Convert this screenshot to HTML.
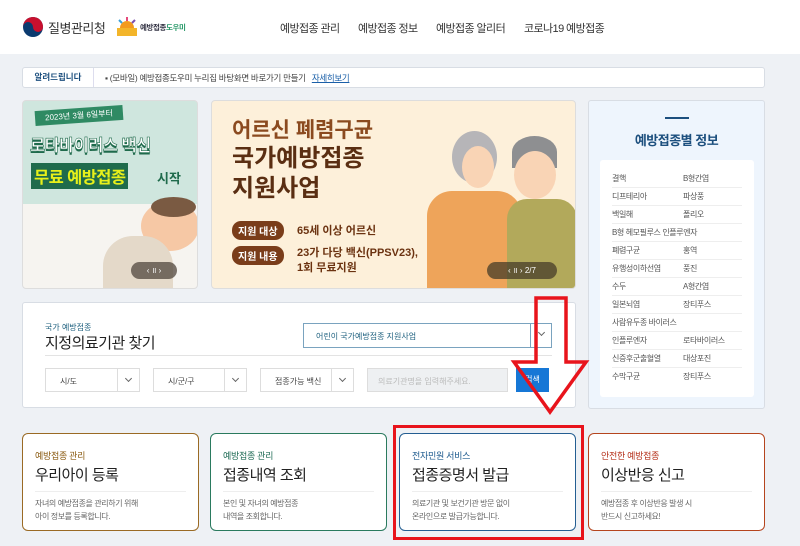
<!DOCTYPE html>
<html><head><meta charset="utf-8"><style>
*{margin:0;padding:0;box-sizing:border-box}
body{width:800px;height:546px;overflow:hidden;background:#eef1f5;font-family:"Liberation Sans","Noto Sans CJK KR",sans-serif;position:relative;color:#333}
.a{position:absolute}
.hdr{left:0;top:0;width:800px;height:54px;background:#fff}
.nav{top:20px;font-size:11px;color:#333;letter-spacing:-0.6px;white-space:nowrap}
.box{background:#fff;border:1px solid #d8dde4;border-radius:3px}
.card{top:433px;height:98px;width:177px;background:#fff;border-radius:6px;border:1.5px solid}
.card .k{position:absolute;left:12px;top:15px;font-size:9px;letter-spacing:-0.3px}
.card .t{position:absolute;left:12px;top:30px;font-size:15px;color:#222;letter-spacing:-0.5px}
.card .l{position:absolute;left:12px;right:12px;top:57px;border-top:1px solid #eee}
.card .d{position:absolute;left:12px;top:63px;font-size:8px;line-height:13px;color:#666;letter-spacing:-0.4px}
.sel{height:24px;border:1px solid #ddd;background:#fff;font-size:8px;color:#444;padding:7px 0 0 14px}
.sel i{position:absolute;right:0;top:0;width:22px;height:22px;border-left:1px solid #ddd}
.sel i:after,.dd:after{content:"";position:absolute;left:8px;top:7px;width:4px;height:4px;border-right:1px solid #666;border-bottom:1px solid #666;transform:rotate(45deg)}
.vl{font-size:8px;color:#555;line-height:18px;letter-spacing:-0.4px}
.vl div{border-bottom:1px solid #eee;height:18px;position:relative;white-space:nowrap}
.vl span{position:absolute;left:71px}
</style></head><body>
<div class="a hdr"></div>
<svg class="a" style="left:22px;top:16px" width="22" height="22" viewBox="0 0 22 22"><circle cx="11" cy="11" r="10" fill="#0b3a6f"/><path d="M1 11a10 10 0 0 1 20 0a5 5 0 0 1-10 0a5 5 0 0 0-10 0z" fill="#c8102e"/></svg>
<div class="a" style="left:48px;top:18px;font-size:13px;color:#333;letter-spacing:-0.5px">질병관리청</div>
<svg class="a" style="left:115px;top:15px" width="24" height="22"><rect x="2" y="13" width="20" height="8" fill="#f3b52a"/><path d="M5 13a7 7 0 0 1 14 0" fill="#f39a1e"/><line x1="12" y1="2" x2="12" y2="6" stroke="#e5497b" stroke-width="2"/><line x1="4" y1="5" x2="7" y2="8" stroke="#3aa0d8" stroke-width="2"/><line x1="20" y1="5" x2="17" y2="8" stroke="#7c4fb0" stroke-width="2"/></svg>
<div class="a" style="left:140px;top:22px;font-size:7.5px;font-weight:bold;color:#334;letter-spacing:-0.4px">예방접종<span style="color:#2a9a6a">도우미</span></div>
<div class="a nav" style="left:280px">예방접종 관리</div>
<div class="a nav" style="left:358px">예방접종 정보</div>
<div class="a nav" style="left:436px">예방접종 알리터</div>
<div class="a nav" style="left:524px">코로나19 예방접종</div>

<div class="a box" style="left:22px;top:67px;width:743px;height:21px;border-radius:3px"></div>
<div class="a" style="left:23px;top:68px;width:71px;height:19px;border-right:1px solid #dde;font-size:8.5px;color:#1c4f7e;text-align:center;line-height:19px;font-weight:bold">알려드립니다</div>
<div class="a" style="left:105px;top:72px;font-size:8.5px;color:#444;letter-spacing:-0.3px">▪ (모바일) 예방접종도우미 누리집 바탕화면 바로가기 만들기 &nbsp;&nbsp;<span style="color:#1a5fa8;text-decoration:underline">자세히보기</span></div>

<div class="a" style="left:22px;top:100px;width:176px;height:189px;border-radius:4px;background:linear-gradient(#cfe6de 0,#cfe6de 55%,#f6f4f0 55%);overflow:hidden;border:1px solid #ddd">
<div class="a" style="left:12px;top:7px;width:88px;height:15px;background:#2f8a63;color:#fff;font-size:8px;text-align:center;line-height:15px;transform:rotate(-4deg);white-space:nowrap">2023년 3월 6일부터</div>
<div class="a" style="left:7px;top:31px;font-size:16.5px;font-weight:bold;color:#fff;-webkit-text-stroke:0.6px #1f6b4c;white-space:nowrap;letter-spacing:-0.6px;text-shadow:0 2px 0 #1f6b4c">로타바이러스 백신</div>
<div class="a" style="left:8px;top:62px;padding:1px 3px;font-size:16.5px;font-weight:bold;color:#e8f01a;background:#1f6b4c;white-space:nowrap;letter-spacing:-0.6px">무료 예방접종</div>
<div class="a" style="left:134px;top:67px;font-size:13px;font-weight:bold;color:#1f6b4c;white-space:nowrap">시작</div>
<div class="a" style="left:118px;top:100px;width:58px;height:50px;border-radius:50%;background:#f6c8a5"></div>
<div class="a" style="left:128px;top:96px;width:45px;height:20px;border-radius:50%;background:#7a5a42"></div>
<div class="a" style="left:80px;top:135px;width:70px;height:55px;background:#e4d9c9;border-radius:30px 30px 0 0"></div>
<div class="a" style="left:108px;top:161px;width:46px;height:17px;border-radius:9px;background:rgba(80,70,60,.75);color:#fff;font-size:8px;text-align:center;line-height:17px">‹ ॥ ›</div>
</div>

<div class="a" style="left:211px;top:100px;width:365px;height:189px;border-radius:4px;background:#fdf0da;overflow:hidden;border:1px solid #ddd">
<div class="a" style="left:20px;top:16px;font-size:21px;font-weight:bold;color:#8b4a1f;line-height:28px;white-space:nowrap">어르신 폐렴구균</div>
<div class="a" style="left:20px;top:43px;font-size:24px;font-weight:bold;color:#5a2e12;line-height:30px;white-space:nowrap">국가예방접종<br>지원사업</div>
<div class="a" style="left:20px;top:120px;padding:2px 6px;background:#7a3d1a;color:#fff;border-radius:9px;font-size:10px;font-weight:bold">지원 대상</div>
<div class="a" style="left:85px;top:121px;font-size:11px;font-weight:bold;color:#6b3210">65세 이상 어르신</div>
<div class="a" style="left:20px;top:145px;padding:2px 6px;background:#7a3d1a;color:#fff;border-radius:9px;font-size:10px;font-weight:bold">지원 내용</div>
<div class="a" style="left:85px;top:145px;font-size:11px;font-weight:bold;color:#6b3210;line-height:15px;white-space:nowrap">23가 다당 백신(PPSV23),<br>1회 무료지원</div>
<div class="a" style="left:240px;top:30px;width:45px;height:52px;border-radius:50%;background:#b6b5b8"></div>
<div class="a" style="left:250px;top:45px;width:32px;height:42px;border-radius:50%;background:#f9d4b5"></div>
<div class="a" style="left:215px;top:90px;width:95px;height:100px;background:#eea45a;border-radius:25px 25px 0 0"></div>
<div class="a" style="left:300px;top:35px;width:45px;height:32px;border-radius:50% 50% 0 0;background:#8e8f91"></div>
<div class="a" style="left:302px;top:50px;width:42px;height:48px;border-radius:50%;background:#f9d4b5"></div>
<div class="a" style="left:295px;top:98px;width:70px;height:92px;background:#b2a95b;border-radius:20px 20px 0 0"></div>
<div class="a" style="left:275px;top:161px;width:70px;height:17px;border-radius:9px;background:rgba(70,60,40,.75);color:#fff;font-size:8px;text-align:center;line-height:17px">‹ ॥ › 2/7</div>
</div>

<div class="a box" style="left:588px;top:100px;width:177px;height:309px;background:#eef5fd"></div>
<div class="a" style="left:665px;top:117px;width:24px;height:2px;background:#1c4f7e"></div>
<div class="a" style="left:588px;top:130px;width:177px;text-align:center;font-size:13px;color:#1c4f7e;font-weight:bold;letter-spacing:-0.5px">예방접종별 정보</div>
<div class="a" style="left:600px;top:160px;width:154px;height:237px;background:#fff;border-radius:3px"></div>
<div class="a vl" style="left:612px;top:170px;width:130px">
<div>결핵<span>B형간염</span></div><div>디프테리아<span>파상풍</span></div><div>백일해<span>폴리오</span></div><div>B형 헤모필루스 인플루엔자</div><div>폐렴구균<span>홍역</span></div><div>유행성이하선염<span>풍진</span></div><div>수두<span>A형간염</span></div><div>일본뇌염<span>장티푸스</span></div><div>사람유두종 바이러스</div><div>인플루엔자<span>로타바이러스</span></div><div>신증후군출혈열<span>대상포진</span></div><div style="border:0">수막구균<span>장티푸스</span></div>
</div>

<div class="a box" style="left:22px;top:302px;width:554px;height:106px"></div>
<div class="a" style="left:45px;top:322px;font-size:8px;color:#1c5f7e">국가 예방접종</div>
<div class="a" style="left:45px;top:332px;font-size:15px;color:#222;letter-spacing:-0.5px">지정의료기관 찾기</div>
<div class="a" style="left:303px;top:323px;width:249px;height:25px;border:1px solid #7aa3bf;background:#fff;font-size:8px;color:#1c5f7e;padding:7px 0 0 12px">어린이 국가예방접종 지원사업</div>
<div class="a dd" style="left:530px;top:323px;width:22px;height:25px;border-left:1px solid #7aa3bf"></div>
<div class="a" style="left:45px;top:355px;width:507px;border-top:1px solid #e3e3e3"></div>
<div class="a sel" style="left:45px;top:368px;width:95px">시/도<i></i></div>
<div class="a sel" style="left:153px;top:368px;width:94px">시/군/구<i></i></div>
<div class="a sel" style="left:260px;top:368px;width:94px">접종가능 백신<i></i></div>
<div class="a" style="left:367px;top:368px;width:141px;height:24px;background:#eef0f2;border:1px solid #ddd;font-size:8px;color:#bbb;padding:7px 0 0 10px">의료기관명을 입력해주세요.</div>
<div class="a" style="left:516px;top:368px;width:33px;height:24px;background:#1677d6;color:#fff;font-size:8px;text-align:center;line-height:24px">검색</div>

<svg class="a" style="left:510px;top:296px" width="80" height="120"><path d="M26 2H56V66H76L40 116L4 66H26Z" fill="none" stroke="#e8141c" stroke-width="3.5"/></svg>

<div class="a card" style="left:22px;border-color:#9a6a24"><div class="k" style="color:#8a5a10">예방접종 관리</div><div class="t">우리아이 등록</div><div class="l"></div><div class="d">자녀의 예방접종을 관리하기 위해<br>아이 정보를 등록합니다.</div></div>
<div class="a card" style="left:210px;border-color:#2a7a5e"><div class="k" style="color:#1f6b55">예방접종 관리</div><div class="t">접종내역 조회</div><div class="l"></div><div class="d">본인 및 자녀의 예방접종<br>내역을 조회합니다.</div></div>
<div class="a card" style="left:399px;border-color:#245e92"><div class="k" style="color:#1d5a8e">전자민원 서비스</div><div class="t">접종증명서 발급</div><div class="l"></div><div class="d">의료기관 및 보건기관 방문 없이<br>온라인으로 발급가능합니다.</div></div>
<div class="a card" style="left:588px;border-color:#b5451e"><div class="k" style="color:#b5301a">안전한 예방접종</div><div class="t">이상반응 신고</div><div class="l"></div><div class="d">예방접종 후 이상반응 발생 시<br>반드시 신고하세요!</div></div>
<div class="a" style="left:393px;top:425px;width:191px;height:115px;border:3px solid #e8141c"></div>
</body></html>
